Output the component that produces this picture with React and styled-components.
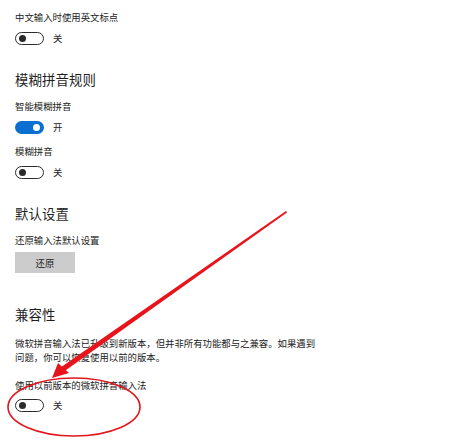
import styled, { createGlobalStyle } from "styled-components"

const GlobalStyle = createGlobalStyle`
  html, body {
    margin: 0;
    padding: 0;
    background: #fff;
  }
  body {
    font-family: "Noto Sans CJK SC", "Noto Sans", sans-serif;
    color: #1a1a1a;
  }
`

const Page = styled.div`
  position: relative;
  width: 474px;
  height: 447px;
  overflow: hidden;
  padding: 10px 0 0 15px;
  box-sizing: border-box;
`

const Heading = styled.h3`
  margin: ${(p) => p.$top}px 0 0;
  font-size: 13.4px;
  line-height: 18px;
  font-weight: 400;
  color: #1f1f1f;
  letter-spacing: 0.1px;
`

const Label = styled.div`
  margin-top: ${(p) => p.$top || 0}px;
  font-size: 9.4px;
  line-height: 14px;
  color: #222;
`

const Para = styled.p`
  margin: 13px 0 0;
  width: 305px;
  font-size: 9.4px;
  line-height: 14px;
  color: #222;
`

const ToggleRow = styled.div`
  display: flex;
  align-items: center;
  gap: 9px;
  margin-top: ${(p) => p.$top || 8}px;
  height: 13px;
`

const Track = styled.span`
  position: relative;
  width: 29px;
  height: 13px;
  box-sizing: border-box;
  border-radius: 7px;
  border: ${(p) => (p.$on ? "none" : "1.5px solid #2b2b2b")};
  background: ${(p) => (p.$on ? "#0a6fd1" : "#fff")};
`

const Knob = styled.span`
  position: absolute;
  top: 50%;
  ${(p) => (p.$on ? "right: 4px;" : "left: 3px;")}
  width: 7px;
  height: 7px;
  margin-top: -3.5px;
  border-radius: 50%;
  background: ${(p) => (p.$on ? "#fff" : "#2b2b2b")};
`

const State = styled.span`
  font-size: 9.4px;
  line-height: 13px;
  color: #222;
`

const Button = styled.button`
  display: block;
  margin-top: 5px;
  width: 60px;
  height: 21px;
  border: none;
  background: #cccccc;
  font-family: inherit;
  font-size: 9.4px;
  color: #222;
  padding: 0;
`

const Overlay = styled.svg`
  position: absolute;
  left: 0;
  top: 0;
  pointer-events: none;
`

const Toggle = ({ on, top }) => (
  <ToggleRow $top={top}>
    <Track $on={on}>
      <Knob $on={on} />
    </Track>
    <State>{on ? "开" : "关"}</State>
  </ToggleRow>
)

export default function App() {
  return (
    <>
      <GlobalStyle />
      <Page>
        <Label>中文输入时使用英文标点</Label>
        <Toggle />

        <Heading $top={25}>模糊拼音规则</Heading>
        <Label $top={11}>智能模糊拼音</Label>
        <Toggle on />
        <Label $top={10}>模糊拼音</Label>
        <Toggle />

        <Heading $top={25}>默认设置</Heading>
        <Label $top={11}>还原输入法默认设置</Label>
        <Button>还原</Button>

        <Heading $top={32}>兼容性</Heading>
        <Para>
          微软拼音输入法已升级到新版本，但并非所有功能都与之兼容。如果遇到问题，你可以恢复使用以前的版本。
        </Para>
        <Label $top={14}>使用以前版本的微软拼音输入法</Label>
        <Toggle top={7} />

        <Overlay width="474" height="447" viewBox="0 0 474 447">
          <polygon points="286,211 287,212.5 64,371.5 60.5,367.5" fill="#e8141b" />
          <polygon points="52,378 58,363 69,373" fill="#e8141b" />
          <ellipse cx="74" cy="407" rx="66" ry="29" fill="none" stroke="#e0161c" strokeWidth="1.6" />
        </Overlay>
      </Page>
    </>
  )
}
